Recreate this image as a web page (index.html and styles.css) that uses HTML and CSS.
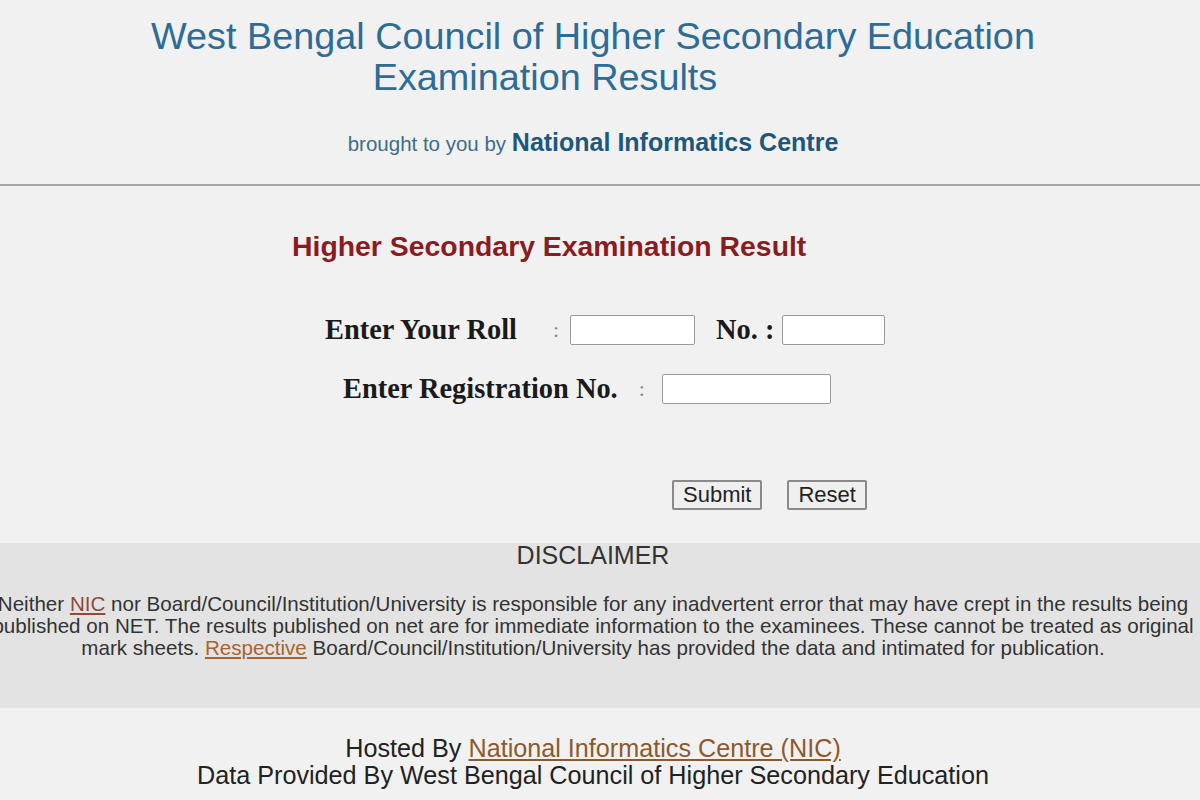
FILE: index.html
```html
<!DOCTYPE html>
<html lang="en">
<head>
    <meta charset="UTF-8">
    <title>WBCHSE Examination Results</title>
    <link rel="stylesheet" href="styles.css">
</head>
<body>

    <!-- Header -->
    <div class="header">
        <h1>
            <span class="title-line">West Bengal Council of Higher Secondary Education</span>
            <span class="title-line second">Examination Results</span>
        </h1>
        <p class="brought">brought to you by <b>National Informatics Centre</b></p>
    </div>

    <!-- Result Form -->
    <div class="result-box">
        <h2>Higher Secondary Examination Result</h2>

        <form class="result-form" onsubmit="return false;">
            <div class="form-row roll-row">
                <label>Enter Your Roll</label>
                <span class="colon roll-colon">:</span>
                <input type="text" class="roll-input">
                <label class="no-label">No. :</label>
                <input type="text" class="no-input">
            </div>
            <div class="form-row reg-row">
                <label>Enter Registration No.</label>
                <span class="colon reg-colon">:</span>
                <input type="text" class="reg-input">
            </div>
            <div class="form-buttons">
                <button type="submit">Submit</button>
                <button type="reset">Reset</button>
            </div>
        </form>
    </div>

    <!-- Disclaimer -->
    <div class="disclaimer">
        <h3>DISCLAIMER</h3>
        <p>Neither <a href="#">NIC</a> nor Board/Council/Institution/University is responsible for any inadvertent error that may have crept in the results being published on NET. The results published on net are for immediate information to the examinees. These cannot be treated as original mark sheets. <a href="#" class="light">Respective</a> Board/Council/Institution/University has provided the data and intimated for publication.</p>
    </div>

    <!-- Footer -->
    <div class="footer">
        <p>Hosted By <a href="#">National Informatics Centre (NIC)</a></p>
        <p>Data Provided By West Bengal Council of Higher Secondary Education</p>
    </div>

</body>
</html>
```

FILE: styles.css
```css
html {
    overflow: hidden;
}
body {
    margin: 0;
    font-family: "Liberation Sans", Arial, sans-serif;
    background-color: #f1f1f1;
    color: #222;
}
.header {
    text-align: center;
    padding: 16px 14px 0 0;
    border-bottom: 2px solid #a5a5a5;
}
.header h1 {
    margin: 0;
    font-size: 37.8px;
    font-weight: normal;
    line-height: 41px;
    color: #2d6c96;
}
.title-line {
    display: block;
    white-space: nowrap;
}
.title-line.second {
    padding-right: 96px;
}
.brought {
    margin: 0;
    padding: 32px 0 28px;
    font-size: 20.5px;
    line-height: 24px;
    color: #3d6c8c;
}
.brought b {
    font-size: 25px;
    color: #1d587c;
}
.result-box {
    box-sizing: border-box;
    padding-top: 44px;
    height: 357px;
}
.result-box h2 {
    margin: 0 0 0 292px;
    font-size: 28.4px;
    line-height: 32px;
    color: #8a1c1f;
}
.result-form {
    margin-top: 52px;
    font-family: "Liberation Serif", "Times New Roman", serif;
}
.form-row {
    display: flex;
    align-items: center;
    height: 32px;
}
.form-row label {
    font-size: 28.4px;
    line-height: 32px;
    font-weight: bold;
    color: #1a1a1a;
    white-space: nowrap;
}
.roll-row {
    padding-left: 325px;
}
.reg-row {
    margin-top: 27px;
    padding-left: 343px;
}
.colon {
    font-size: 22px;
    color: #888;
}
.roll-colon {
    margin: 0 11px 0 36px;
}
.reg-colon {
    margin: 0 17px 0 21px;
}
input {
    height: 30px;
    box-sizing: border-box;
    border: 1px solid #9a9a9a;
    border-radius: 2px;
    background: #fff;
}
.roll-input {
    width: 125px;
}
.no-label {
    margin: 0 8px 0 21px;
}
.no-input {
    width: 103px;
}
.reg-input {
    width: 169px;
}
.form-buttons {
    margin-top: 75px;
    padding-left: 672px;
    display: flex;
    gap: 25px;
}
.form-buttons button {
    font-family: "Liberation Sans", Arial, sans-serif;
    font-size: 22px;
    height: 30px;
    padding: 0 9px;
    background: #efefef;
    border: 2px solid #8a8a8a;
    border-radius: 2px;
    color: #222;
}
.disclaimer {
    background-color: #e3e3e3;
    height: 165px;
    text-align: center;
    color: #333;
}
.disclaimer h3 {
    margin: 0;
    padding: 0 14px 0 0;
    font-size: 25px;
    font-weight: normal;
    line-height: 24px;
}
.disclaimer p {
    margin: 26px 0 0 -9px;
    width: 1204px;
    font-size: 20.6px;
    line-height: 22px;
}
.disclaimer a {
    color: #8f4a38;
}
.disclaimer a.light {
    color: #a8642c;
}
.footer {
    padding: 27px 14px 0 0;
    text-align: center;
    font-size: 25.2px;
    line-height: 27px;
    color: #222;
}
.footer p {
    margin: 0;
    white-space: nowrap;
}
.footer a {
    color: #8c5a2c;
}
```
